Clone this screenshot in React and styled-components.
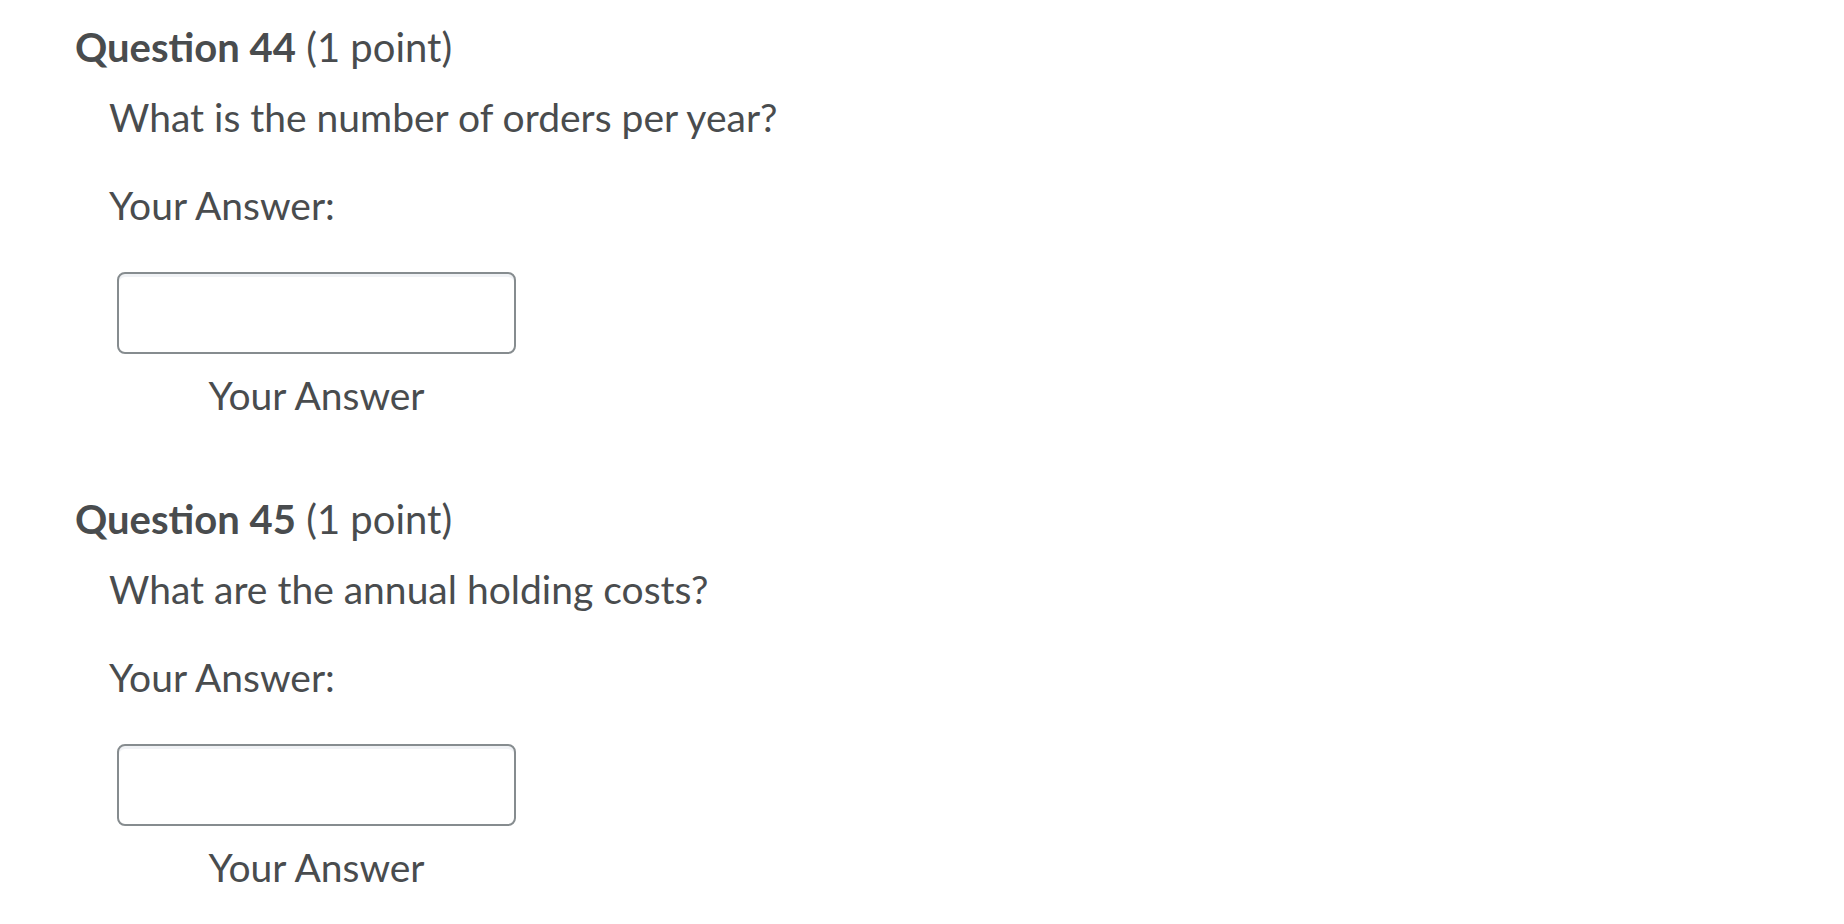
import React from 'react'
import styled, { createGlobalStyle } from 'styled-components'

const GlobalStyle = createGlobalStyle`
  html, body {
    margin: 0;
    padding: 0;
    background: #fff;
  }
  body {
    font-family: Lato, "Noto Sans", sans-serif;
    color: #494c4e;
  }
`

const Page = styled.div`
  padding: 23px 0 0 75px;
`

const QuestionBlock = styled.section`
  margin-bottom: 77px;
`

const Heading = styled.h2`
  margin: 0;
  font-size: 40px;
  line-height: 1.2;
  font-weight: 400;

  strong {
    font-weight: 700;
  }
`

const Body = styled.div`
  padding-left: 34px;
  margin-top: 23px;
`

const Prompt = styled.p`
  margin: 0;
  font-size: 39px;
  line-height: 1.2;
`

const AnswerLabel = styled.label`
  display: block;
  margin-top: 41px;
  font-size: 39px;
  line-height: 1.2;
`

const AnswerField = styled.div`
  display: flex;
  flex-direction: column;
  align-items: center;
  width: max-content;
  margin: 43px 0 0 8px;
`

const AnswerInput = styled.input`
  box-sizing: border-box;
  width: 399px;
  height: 82px;
  border: 2px solid #868c8f;
  border-radius: 8px;
  background: #fff;
  box-shadow: inset 0 3px 0 0 rgba(185, 194, 208, 0.22);
  outline: none;
  font-family: inherit;
  font-size: 36px;
  padding: 0 16px;
  color: #494c4e;
`

const Caption = styled.span`
  margin-top: 18px;
  font-size: 39px;
  line-height: 1.2;
`

const questions = [
  { num: 44, points: 1, text: 'What is the number of orders per year?' },
  { num: 45, points: 1, text: 'What are the annual holding costs?' },
]

const Question = ({ num, points, text }) => (
  <QuestionBlock>
    <Heading>
      <strong>Question {num}</strong> ({points} point)
    </Heading>
    <Body>
      <Prompt>{text}</Prompt>
      <AnswerLabel htmlFor={`q${num}`}>Your Answer:</AnswerLabel>
      <AnswerField>
        <AnswerInput id={`q${num}`} type="text" />
        <Caption>Your Answer</Caption>
      </AnswerField>
    </Body>
  </QuestionBlock>
)

const App = () => (
  <Page>
    <GlobalStyle />
    {questions.map(q => (
      <Question key={q.num} {...q} />
    ))}
  </Page>
)

export default App
